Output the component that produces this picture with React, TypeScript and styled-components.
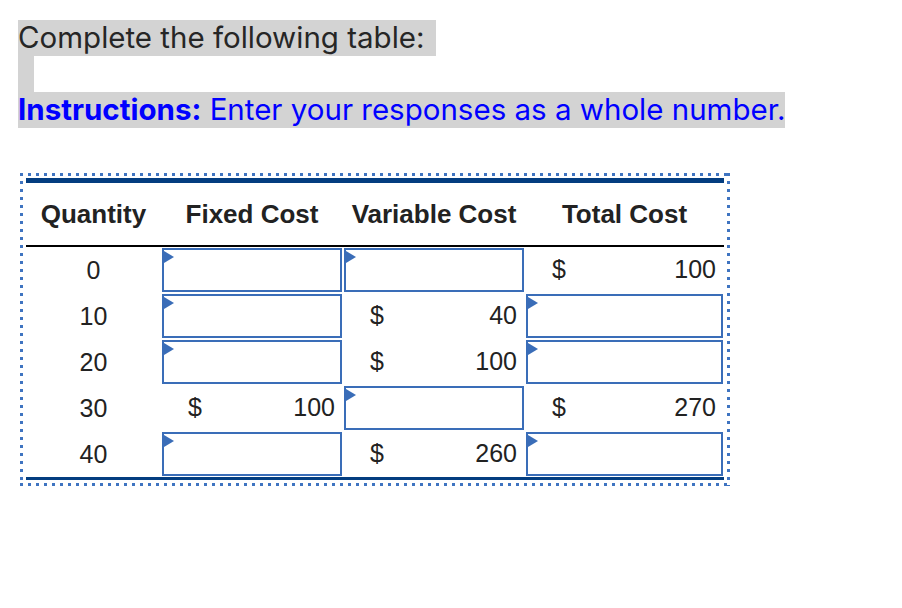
import React from "react";
import styled, { createGlobalStyle } from "styled-components";

const GlobalStyle = createGlobalStyle`
  html, body {
    margin: 0;
    padding: 0;
    background: #ffffff;
  }
  body {
    font-family: "Liberation Sans", Arial, sans-serif;
  }
`;

const DOT = "#3f74c1";
const BOX = "#3a6db8";
const NAVY = "#033d80";
const INK = "#222222";

const Page = styled.div`
  padding: 20px 0 0 18px;
  width: 884px;
  height: 588px;
  box-sizing: border-box;
`;

const Prompt = styled.div`
  display: flex;
  flex-direction: column;
  align-items: flex-start;
  font-family: Inter, "Open Sans", sans-serif;
  font-size: 29.5px;
`;

const Highlight = styled.div<{ $tail: number }>`
  background: #d3d3d3;
  height: 36px;
  line-height: 35px;
  padding-right: ${(p) => p.$tail}px;
  white-space: nowrap;
`;

const Title = styled(Highlight)`
  color: #262626;
`;

const Spacer = styled.div`
  background: #d3d3d3;
  width: 16px;
  height: 36px;
`;

const Instructions = styled(Highlight)`
  color: #0000ff;
  b {
    font-weight: 700;
  }
`;

const Frame = styled.div`
  width: fit-content;
  margin: 45px 0 0 2px;
  padding: 2px 3px 3px 3px;
  border: 3px solid transparent;
  background:
    repeating-linear-gradient(90deg, ${DOT} 0 3px, transparent 3px 8px) top left / 100% 3px no-repeat,
    repeating-linear-gradient(90deg, ${DOT} 0 3px, transparent 3px 8px) bottom left / 100% 3px no-repeat,
    repeating-linear-gradient(180deg, ${DOT} 0 3px, transparent 3px 8px) top left / 3px 100% no-repeat,
    repeating-linear-gradient(180deg, ${DOT} 0 3px, transparent 3px 8px) top right / 3px 100% no-repeat;
  background-origin: border-box;
`;

const Table = styled.table`
  border-collapse: collapse;
  table-layout: fixed;
  width: 698px;
  border-top: 5px solid ${NAVY};
  border-bottom: 3px solid ${NAVY};
  font-family: "Liberation Sans", Arial, sans-serif;
  font-size: 25px;
  color: ${INK};
`;

const HeadCell = styled.th`
  height: 62px;
  padding: 0;
  font-size: 26px;
  font-weight: 700;
  text-align: center;
  vertical-align: middle;
  border-bottom: 2px solid #000;
`;

const QtyCell = styled.td`
  height: 44px;
  padding: 1px 0;
  text-align: center;
  vertical-align: middle;
`;

const Cell = styled.td`
  height: 44px;
  padding: 1px 1px;
  vertical-align: middle;
`;

const Money = styled.div`
  display: flex;
  justify-content: space-between;
  align-items: center;
  padding: 0 7px 2px 26px;
`;

const BoxWrap = styled.div`
  position: relative;
  height: 44px;
`;

const Entry = styled.input`
  box-sizing: border-box;
  display: block;
  width: 100%;
  height: 44px;
  margin: 0;
  border: 2px solid ${BOX};
  border-radius: 0;
  background: #fff;
  outline: none;
  font: inherit;
`;

const Marker = styled.span`
  position: absolute;
  left: 2px;
  top: 3px;
  width: 0;
  height: 0;
  border-top: 6px solid transparent;
  border-bottom: 6px solid transparent;
  border-left: 10px solid ${BOX};
`;

type Value = number | null;

const rows: { q: number; fixed: Value; variable: Value; total: Value }[] = [
  { q: 0, fixed: null, variable: null, total: 100 },
  { q: 10, fixed: null, variable: 40, total: null },
  { q: 20, fixed: null, variable: 100, total: null },
  { q: 30, fixed: 100, variable: null, total: 270 },
  { q: 40, fixed: null, variable: 260, total: null },
];

function ValueCell({ value, label }: { value: Value; label: string }) {
  return (
    <Cell>
      {value === null ? (
        <BoxWrap>
          <Entry type="text" aria-label={label} />
          <Marker />
        </BoxWrap>
      ) : (
        <Money>
          <span>$</span>
          <span>{value}</span>
        </Money>
      )}
    </Cell>
  );
}

export default function App() {
  return (
    <>
      <GlobalStyle />
      <Page>
        <Prompt>
          <Title $tail={11}>Complete the following table:</Title>
          <Spacer />
          <Instructions $tail={0}>
            <b>Instructions:</b> Enter your responses as a whole number.
          </Instructions>
        </Prompt>
        <Frame>
          <Table>
            <colgroup>
              <col style={{ width: 135 }} />
              <col style={{ width: 182 }} />
              <col style={{ width: 182 }} />
              <col style={{ width: 199 }} />
            </colgroup>
            <thead>
              <tr>
                <HeadCell>Quantity</HeadCell>
                <HeadCell>Fixed Cost</HeadCell>
                <HeadCell>Variable Cost</HeadCell>
                <HeadCell>Total Cost</HeadCell>
              </tr>
            </thead>
            <tbody>
              {rows.map((r) => (
                <tr key={r.q}>
                  <QtyCell>{r.q}</QtyCell>
                  <ValueCell value={r.fixed} label={`Fixed cost at ${r.q}`} />
                  <ValueCell value={r.variable} label={`Variable cost at ${r.q}`} />
                  <ValueCell value={r.total} label={`Total cost at ${r.q}`} />
                </tr>
              ))}
            </tbody>
          </Table>
        </Frame>
      </Page>
    </>
  );
}
